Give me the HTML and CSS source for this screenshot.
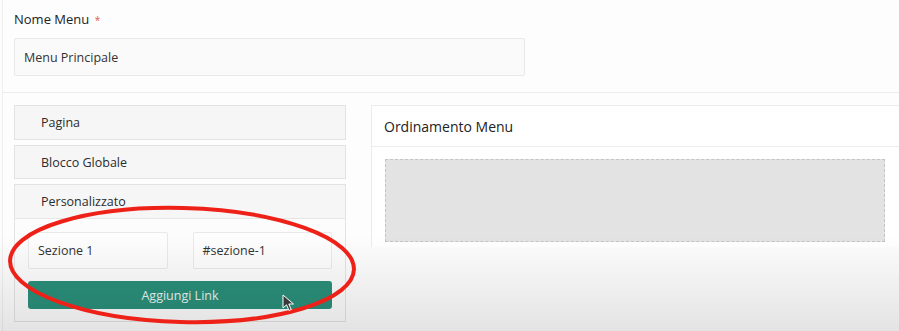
FILE: index.html
```html
<!DOCTYPE html>
<html lang="it">
<head>
<meta charset="UTF-8">
<title>Menu</title>
<link rel="stylesheet" href="styles.css">
</head>
<body>
<div class="page">
  <div class="field">
    <label class="label">Nome Menu <span class="req">*</span></label>
    <div class="input wide">Menu Principale</div>
  </div>
  <div class="sep"></div>

  <div class="row">
    <div class="left">
      <div class="acc">Pagina</div>
      <div class="acc short">Blocco Globale</div>
      <div class="acc open">Personalizzato</div>
      <div class="acc-body">
        <div class="pair">
          <div class="input small">Sezione 1</div>
          <div class="input small">#sezione-1</div>
        </div>
        <div class="btn">Aggiungi Link</div>
      </div>
    </div>

    <div class="right">
      <div class="panel-head">Ordinamento Menu</div>
      <div class="panel-body">
        <div class="dropzone"></div>
      </div>
    </div>
  </div>
</div>

<div class="shade"></div>

<svg class="mark" width="899" height="331" viewBox="0 0 899 331">
  <ellipse cx="182" cy="265" rx="172" ry="57" transform="rotate(1.5 182 265)" fill="none" stroke="#ee2119" stroke-width="4"/>
</svg>

<svg class="cursor" width="14" height="18" viewBox="0 0 14 18">
  <path d="M1 1 L1 14 L4.5 10.8 L7 16.5 L9.2 15.5 L6.8 10 L11.5 10 Z" fill="#3a3a3a" stroke="#ffffff" stroke-width="1"/>
</svg>
</body>
</html>
```

FILE: styles.css
```css
body {
	margin: 0;
	background: #fdfdfd;
	font-family: "Open Sans", "Liberation Sans", sans-serif;
	color: #2a2a2a;
	height: 331px;
	overflow: hidden;
}

.page {
	margin-left: 2px;
	border-left: 1px solid #efefef;
	padding: 11px 0 0 11px;
	min-height: 331px;
	box-sizing: border-box;
}

.label {
	display: block;
	font-size: 13px;
	font-weight: 500;
	line-height: 16px;
	color: #222;
}
.req {
	color: #e05656;
	font-size: 10px;
	margin-left: 2px;
}

.input {
	background: #fafafa;
	border: 1px solid #e9e9e9;
	border-radius: 2px;
	box-sizing: border-box;
	font-size: 12.5px;
	color: #333;
	display: flex;
	align-items: center;
	padding-left: 9px;
}
.wide {
	margin-top: 10px;
	width: 511px;
	height: 38px;
}

.sep {
	margin: 16px 0 12px -11px;
	border-top: 1px solid #ededed;
}

.row {
	display: flex;
	gap: 25px;
}

.left {
	width: 332px;
	flex: none;
}
.acc {
	height: 35px;
	box-sizing: border-box;
	background: #f6f6f7;
	border: 1px solid #e3e3e3;
	display: flex;
	align-items: center;
	padding-left: 26px;
	font-size: 12.5px;
	color: #2c2c2c;
	margin-bottom: 5px;
}
.acc.short {
	height: 34px;
}
.acc.open {
	margin-bottom: 0;
	border-bottom-color: #e6e6e6;
}
.acc-body {
	border: 1px solid #e3e3e3;
	border-top: 0;
	padding: 13px 13px 12px 13px;
	background: #fcfcfc;
}
.pair {
	display: flex;
	gap: 25px;
}
.small {
	width: 140px;
	height: 37px;
	background: #fdfdfd;
}
.btn {
	margin-top: 12px;
	height: 28px;
	border-radius: 3px;
	background: #2a8f7a;
	color: #e9f4f1;
	font-size: 12.5px;
	display: flex;
	align-items: center;
	justify-content: center;
}

.right {
	flex: 1;
	background: #ffffff;
	border: 1px solid #ececec;
	border-right: 0;
	border-bottom: 0;
	height: 141px;
}
.panel-head {
	height: 40px;
	border-bottom: 1px solid #ececec;
	display: flex;
	align-items: center;
	padding-left: 12px;
	font-size: 14px;
	font-weight: 500;
	color: #222;
}
.panel-body {
	padding: 12px 14px 0 13px;
}
.dropzone {
	height: 83px;
	background: #e3e3e3;
	border: 1px dashed #c4c4c4;
	box-sizing: border-box;
}

.shade {
	position: absolute;
	left: 0;
	top: 236px;
	width: 899px;
	height: 95px;
	background: linear-gradient(to bottom, rgba(0,0,0,0), rgba(0,0,0,0.1));
	pointer-events: none;
}

.mark {
	position: absolute;
	left: 0;
	top: 0;
	pointer-events: none;
}
.cursor {
	position: absolute;
	left: 282px;
	top: 294px;
}
```
